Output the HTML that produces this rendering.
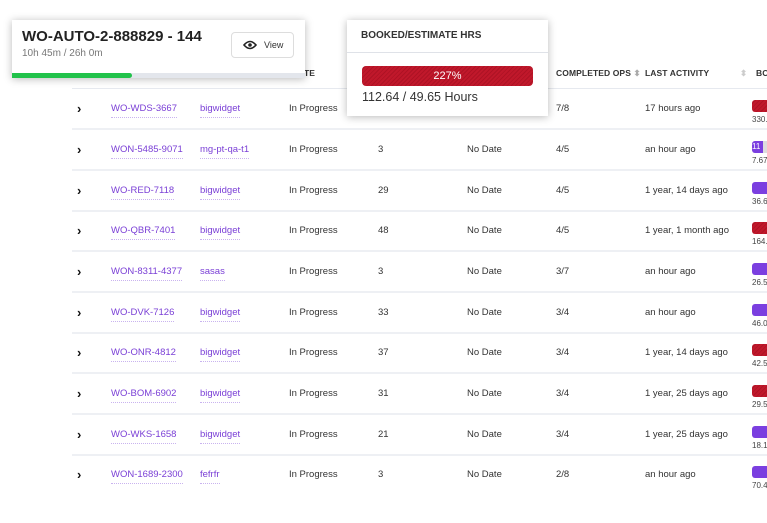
<!DOCTYPE html>
<html><head><style>
*{margin:0;padding:0;box-sizing:border-box}
body{width:767px;height:523px;overflow:hidden;background:#fff;font-family:"Liberation Sans",sans-serif;position:relative;color:#333}
.hdr{position:absolute;top:68px;font-size:8.5px;font-weight:bold;color:#333;letter-spacing:.1px}
.hl{position:absolute;left:72px;right:0;top:88px;height:1px;background:#e6e9ef}
.row{position:absolute;left:72px;right:0;height:41px;border-bottom:2px solid #eef0f4}
.c{position:absolute;top:14px;font-size:9.5px;color:#333;white-space:nowrap}
.lnk{color:#7a3fd6;border-bottom:1px dotted #c9b3ef;padding-bottom:3px}
.chev{position:absolute;left:5px;top:12px;font-size:13px;font-weight:bold;color:#111}
.bar{position:absolute;left:680px;top:11px;width:30px;height:12px;border-radius:3px}
.red{background:repeating-linear-gradient(135deg,#c0182b 0 2px,#ae1224 2px 3px)}
.pur{background:#7b3fe0}
.num{position:absolute;left:680px;top:26px;font-size:8px;color:#444}
.card{position:absolute;background:#fff;box-shadow:0 1px 8px rgba(0,0,0,.28)}
</style></head><body>
<div class="hdr" style="left:556px">COMPLETED OPS <span style="color:#aaa">⬍</span></div>
<div class="hdr" style="left:645px">LAST ACTIVITY</div>
<div class="hdr" style="left:740px;color:#ccc">⬍</div>
<div class="hdr" style="left:756px">BO</div>
<div class="hdr" style="left:304px">TE</div>
<div class="hl"></div>

<div class="row" style="top:89px"><span class="chev">›</span><span class="c lnk" style="left:39px">WO-WDS-3667</span><span class="c lnk" style="left:128px">bigwidget</span><span class="c" style="left:217px">In Progress</span><span class="c" style="left:484px">7/8</span><span class="c" style="left:573px">17 hours ago</span><div class="bar red"></div><span class="num">330.</span></div>
<div class="row" style="top:130px"><span class="chev">›</span><span class="c lnk" style="left:39px">WON-5485-9071</span><span class="c lnk" style="left:128px">mg-pt-qa-t1</span><span class="c" style="left:217px">In Progress</span><span class="c" style="left:306px">3</span><span class="c" style="left:395px">No Date</span><span class="c" style="left:484px">4/5</span><span class="c" style="left:573px">an hour ago</span><div class="bar" style="background:#ddd"><div style="width:11px;height:12px;background:#7b3fe0;border-radius:3px 0 0 3px;color:#fff;font-size:8px;line-height:12px">11</div></div><span class="num">7.67</span></div>
<div class="row" style="top:171px"><span class="chev">›</span><span class="c lnk" style="left:39px">WO-RED-7118</span><span class="c lnk" style="left:128px">bigwidget</span><span class="c" style="left:217px">In Progress</span><span class="c" style="left:306px">29</span><span class="c" style="left:395px">No Date</span><span class="c" style="left:484px">4/5</span><span class="c" style="left:573px">1 year, 14 days ago</span><div class="bar pur"></div><span class="num">36.6</span></div>
<div class="row" style="top:211px"><span class="chev">›</span><span class="c lnk" style="left:39px">WO-QBR-7401</span><span class="c lnk" style="left:128px">bigwidget</span><span class="c" style="left:217px">In Progress</span><span class="c" style="left:306px">48</span><span class="c" style="left:395px">No Date</span><span class="c" style="left:484px">4/5</span><span class="c" style="left:573px">1 year, 1 month ago</span><div class="bar red"></div><span class="num">164.</span></div>
<div class="row" style="top:252px"><span class="chev">›</span><span class="c lnk" style="left:39px">WON-8311-4377</span><span class="c lnk" style="left:128px">sasas</span><span class="c" style="left:217px">In Progress</span><span class="c" style="left:306px">3</span><span class="c" style="left:395px">No Date</span><span class="c" style="left:484px">3/7</span><span class="c" style="left:573px">an hour ago</span><div class="bar pur"></div><span class="num">26.5</span></div>
<div class="row" style="top:293px"><span class="chev">›</span><span class="c lnk" style="left:39px">WO-DVK-7126</span><span class="c lnk" style="left:128px">bigwidget</span><span class="c" style="left:217px">In Progress</span><span class="c" style="left:306px">33</span><span class="c" style="left:395px">No Date</span><span class="c" style="left:484px">3/4</span><span class="c" style="left:573px">an hour ago</span><div class="bar pur"></div><span class="num">46.0</span></div>
<div class="row" style="top:333px"><span class="chev">›</span><span class="c lnk" style="left:39px">WO-ONR-4812</span><span class="c lnk" style="left:128px">bigwidget</span><span class="c" style="left:217px">In Progress</span><span class="c" style="left:306px">37</span><span class="c" style="left:395px">No Date</span><span class="c" style="left:484px">3/4</span><span class="c" style="left:573px">1 year, 14 days ago</span><div class="bar red"></div><span class="num">42.5</span></div>
<div class="row" style="top:374px"><span class="chev">›</span><span class="c lnk" style="left:39px">WO-BOM-6902</span><span class="c lnk" style="left:128px">bigwidget</span><span class="c" style="left:217px">In Progress</span><span class="c" style="left:306px">31</span><span class="c" style="left:395px">No Date</span><span class="c" style="left:484px">3/4</span><span class="c" style="left:573px">1 year, 25 days ago</span><div class="bar red"></div><span class="num">29.5</span></div>
<div class="row" style="top:415px"><span class="chev">›</span><span class="c lnk" style="left:39px">WO-WKS-1658</span><span class="c lnk" style="left:128px">bigwidget</span><span class="c" style="left:217px">In Progress</span><span class="c" style="left:306px">21</span><span class="c" style="left:395px">No Date</span><span class="c" style="left:484px">3/4</span><span class="c" style="left:573px">1 year, 25 days ago</span><div class="bar pur"></div><span class="num">18.1</span></div>
<div class="row" style="top:455px;border-bottom:none"><span class="chev">›</span><span class="c lnk" style="left:39px">WON-1689-2300</span><span class="c lnk" style="left:128px">fefrfr</span><span class="c" style="left:217px">In Progress</span><span class="c" style="left:306px">3</span><span class="c" style="left:395px">No Date</span><span class="c" style="left:484px">2/8</span><span class="c" style="left:573px">an hour ago</span><div class="bar pur"></div><span class="num">70.4</span></div>

<div class="card" style="left:12px;top:20px;width:293px;height:58px">
<div style="position:absolute;left:10px;top:8px;font-size:15px;font-weight:bold;color:#222">WO-AUTO-2-888829 - 144</div>
<div style="position:absolute;left:10px;top:28px;font-size:10px;color:#777">10h 45m / 26h 0m</div>
<div style="position:absolute;left:219px;top:12px;width:63px;height:26px;border:1px solid #ddd;border-radius:4px;font-size:9px;color:#333;line-height:24px;padding-left:32px">View
<svg style="position:absolute;left:11px;top:7px" width="14" height="10" viewBox="0 0 14 10"><path d="M1 5Q7-2 13 5Q7 12 1 5Z" fill="none" stroke="#222" stroke-width="1.6"/><circle cx="7" cy="5" r="1.8" fill="#222"/></svg></div>
<div style="position:absolute;left:0;right:0;bottom:0;height:5px;background:#e3e6ec"><div style="width:120px;height:5px;background:#21c24a;border-radius:0 3px 3px 0"></div></div>
</div>

<div class="card" style="left:347px;top:20px;width:201px;height:96px">
<div style="position:absolute;left:14px;top:10px;font-size:10px;font-weight:bold;color:#333">BOOKED/ESTIMATE HRS</div>
<div style="position:absolute;left:0;right:0;top:32px;height:1px;background:#dfe2e8"></div>
<div class="red" style="position:absolute;left:15px;top:46px;width:171px;height:20px;border-radius:4px;color:#fff;font-size:11px;text-align:center;line-height:20px">227%</div>
<div style="position:absolute;left:15px;top:70px;font-size:12.5px;color:#333">112.64 / 49.65 Hours</div>
</div>
</body></html>
